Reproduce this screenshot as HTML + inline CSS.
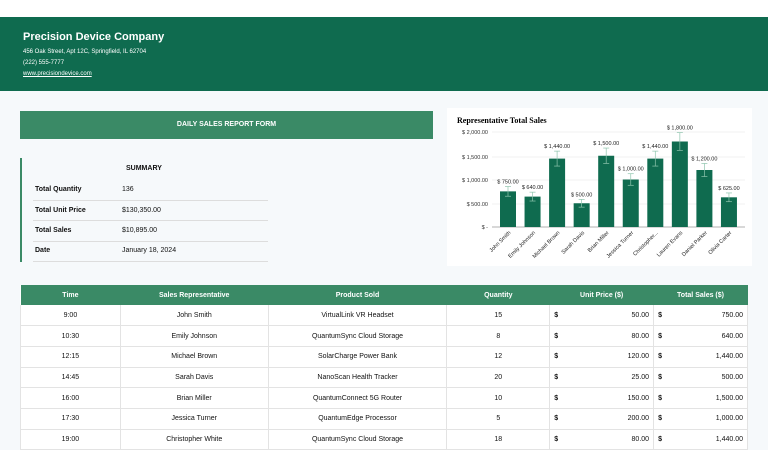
<!DOCTYPE html>
<html><head><style>
*{margin:0;padding:0;box-sizing:border-box}
body{width:768px;height:447px;background:#f6f9fb;font-family:"Liberation Sans",sans-serif;position:relative;overflow:hidden;color:#111}
.top{position:absolute;left:0;top:0;width:768px;height:17px;background:#fff}
.hdr{position:absolute;left:0;top:17px;width:768px;height:74px;background:#0f6b4f;color:#fff}
.a{position:absolute;white-space:nowrap}
.ban{position:absolute;left:20px;top:111px;width:413px;height:28px;background:#3a8a66;color:#fff;font-size:7px;font-weight:bold;text-align:center;line-height:28px}
.sum{position:absolute;left:20px;top:158px;width:2px;height:104px;background:#3a8a66}
.dv{position:absolute;left:33px;width:235px;height:1px;background:#ddd}
.sl{font-size:7px;font-weight:bold}
.sv{font-size:7px}
table{position:absolute;left:20px;top:285px;width:728px;border-collapse:collapse;font-size:7px;background:#fff}
th{background:#3a8a66;color:#fff;height:20px;font-weight:bold;text-align:center}
td{height:20.7px;text-align:center;border:1px solid #e3e3e3;border-top:none}
td.d{text-align:left;padding-left:4px;border-right:none;font-weight:bold}
td.n{text-align:right;padding-right:4px;border-left:none}
</style></head><body>
<div class="top"></div>
<div class="hdr">
<div class="a" style="left:23px;top:14px;font-size:11px;font-weight:bold">Precision Device Company</div>
<div class="a" style="left:23px;top:32px;font-size:6px">456 Oak Street, Apt 12C, Springfield, IL 62704</div>
<div class="a" style="left:23px;top:43px;font-size:6px">(222) 555-7777</div>
<div class="a" style="left:23px;top:54px;font-size:6px;text-decoration:underline">www.precisiondevice.com</div>
</div>
<div class="ban">DAILY SALES REPORT FORM</div>
<div class="sum"></div>
<div class="a sl" style="left:126px;top:165px">SUMMARY</div>
<div class="a sl" style="left:35px;top:186px">Total Quantity</div><div class="a sv" style="left:122px;top:186px">136</div>
<div class="dv" style="top:200px"></div>
<div class="a sl" style="left:35px;top:207px">Total Unit Price</div><div class="a sv" style="left:122px;top:207px">$130,350.00</div>
<div class="dv" style="top:220px"></div>
<div class="a sl" style="left:35px;top:227px">Total Sales</div><div class="a sv" style="left:122px;top:227px">$10,895.00</div>
<div class="dv" style="top:241px"></div>
<div class="a sl" style="left:35px;top:247px">Date</div><div class="a sv" style="left:122px;top:247px">January 18, 2024</div>
<div class="dv" style="top:261px"></div>
<div style="position:absolute;left:447px;top:108px;width:305px;height:158px;background:#fff"></div>
<svg style="position:absolute;left:0;top:0" width="768" height="447" font-family="Liberation Sans,sans-serif">
<text x="457" y="123" font-family="Liberation Serif,serif" font-weight="bold" font-size="8">Representative Total Sales</text>
<g stroke="#e6e6e6" stroke-width="0.6"><line x1="492" y1="132" x2="745" y2="132"/><line x1="492" y1="157" x2="745" y2="157"/><line x1="492" y1="180" x2="745" y2="180"/><line x1="492" y1="204" x2="745" y2="204"/></g>
<line x1="492" y1="227" x2="745" y2="227" stroke="#999" stroke-width="0.8"/>
<g font-size="5.5" fill="#333" text-anchor="end"><text x="488" y="134">$ 2,000.00</text><text x="488" y="159">$ 1,500.00</text><text x="488" y="182">$ 1,000.00</text><text x="488" y="206">$ 500.00</text><text x="488" y="229">$ -</text></g>
<g fill="#0f6b4f" id="bars"></g>
<g id="lbl" font-size="5.5" fill="#222"></g>
</svg>
<script>
var d=[["John Smith",750],["Emily Johnson",640],["Michael Brown",1440],["Sarah Davis",500],["Brian Miller",1500],["Jessica Turner",1000],["Christopher...",1440],["Lauren Evans",1800],["Daniel Parker",1200],["Olivia Carter",625]];
var s="",l="";d.forEach(function(e,i){var cx=508+i*24.55,h=e[1]*95/2000,y=227-h;
s+='<rect x="'+(cx-8)+'" y="'+y+'" width="16" height="'+h+'"/>';
var er=h*0.08+2;s+='<g stroke="#8fc5ae" stroke-width="0.7"><line x1="'+cx+'" y1="'+(y-er)+'" x2="'+cx+'" y2="'+(y+er)+'"/><line x1="'+(cx-3)+'" y1="'+(y-er)+'" x2="'+(cx+3)+'" y2="'+(y-er)+'"/><line x1="'+(cx-3)+'" y1="'+(y+er)+'" x2="'+(cx+3)+'" y2="'+(y+er)+'"/></g>';
l+='<text x="'+cx+'" y="'+(y-er-3)+'" text-anchor="middle">$ '+e[1].toLocaleString("en-US")+'.00</text>';
l+='<text transform="translate('+(cx+3)+',233) rotate(-45)" text-anchor="end">'+e[0]+'</text>';});
document.getElementById("bars").innerHTML=s;document.getElementById("lbl").innerHTML=l;
</script>
<table>
<colgroup><col style="width:100px"><col style="width:148px"><col style="width:179px"><col style="width:103px"><col style="width:14px"><col style="width:90px"><col style="width:14px"><col style="width:80px"></colgroup>
<tr><th>Time</th><th>Sales Representative</th><th>Product Sold</th><th>Quantity</th><th colspan="2">Unit Price ($)</th><th colspan="2">Total Sales ($)</th></tr>
<tr><td>9:00</td><td>John Smith</td><td>VirtualLink VR Headset</td><td>15</td><td class="d">$</td><td class="n">50.00</td><td class="d">$</td><td class="n">750.00</td></tr>
<tr><td>10:30</td><td>Emily Johnson</td><td>QuantumSync Cloud Storage</td><td>8</td><td class="d">$</td><td class="n">80.00</td><td class="d">$</td><td class="n">640.00</td></tr>
<tr><td>12:15</td><td>Michael Brown</td><td>SolarCharge Power Bank</td><td>12</td><td class="d">$</td><td class="n">120.00</td><td class="d">$</td><td class="n">1,440.00</td></tr>
<tr><td>14:45</td><td>Sarah Davis</td><td>NanoScan Health Tracker</td><td>20</td><td class="d">$</td><td class="n">25.00</td><td class="d">$</td><td class="n">500.00</td></tr>
<tr><td>16:00</td><td>Brian Miller</td><td>QuantumConnect 5G Router</td><td>10</td><td class="d">$</td><td class="n">150.00</td><td class="d">$</td><td class="n">1,500.00</td></tr>
<tr><td>17:30</td><td>Jessica Turner</td><td>QuantumEdge Processor</td><td>5</td><td class="d">$</td><td class="n">200.00</td><td class="d">$</td><td class="n">1,000.00</td></tr>
<tr><td>19:00</td><td>Christopher White</td><td>QuantumSync Cloud Storage</td><td>18</td><td class="d">$</td><td class="n">80.00</td><td class="d">$</td><td class="n">1,440.00</td></tr>
</table>
</body></html>
